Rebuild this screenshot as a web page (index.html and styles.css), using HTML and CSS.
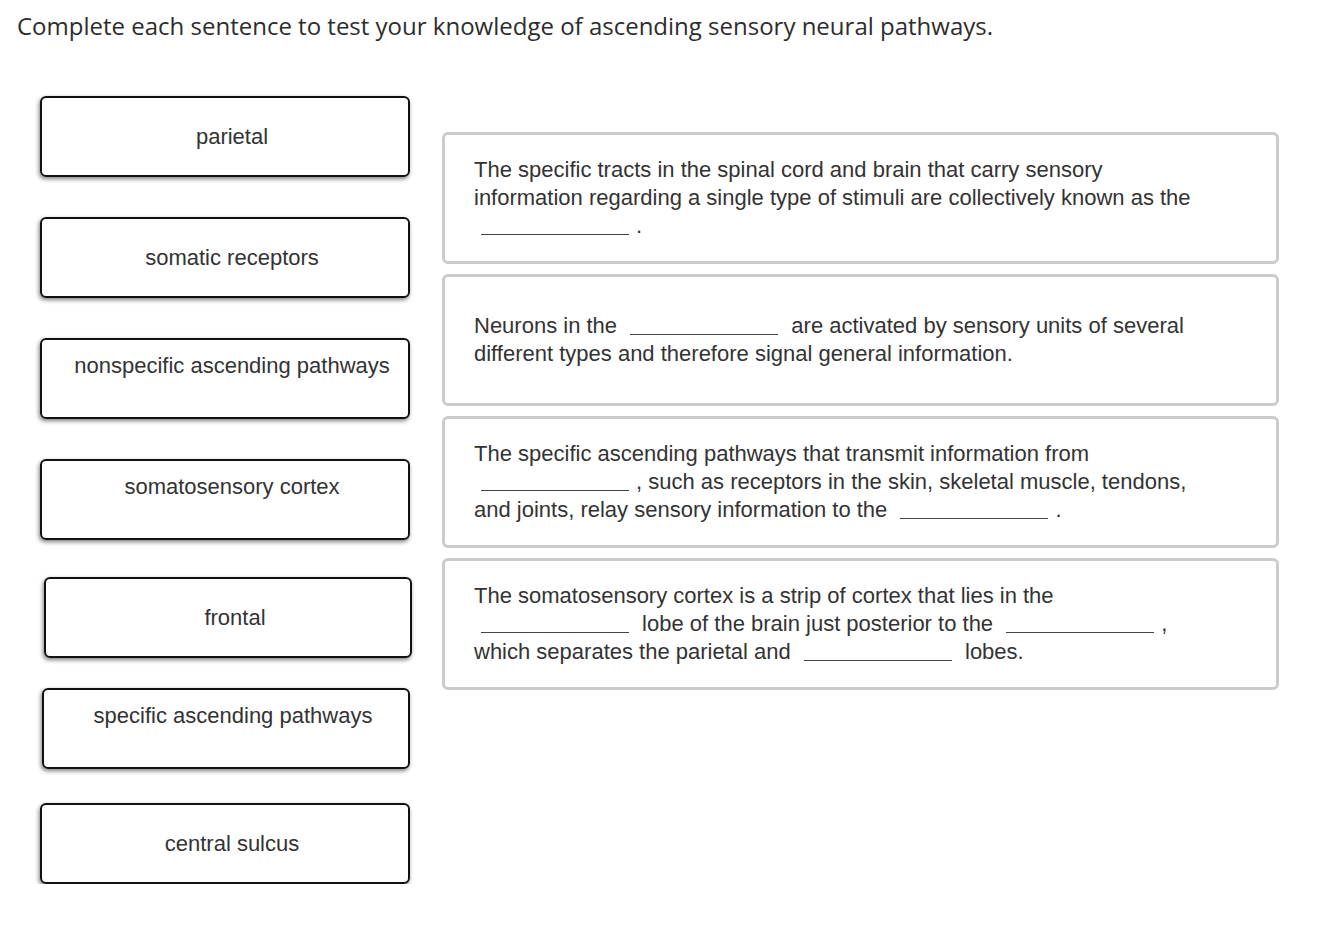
FILE: index.html
```html
<!DOCTYPE html>
<html lang="en">
<head>
    <meta charset="UTF-8">
    <meta name="viewport" content="width=device-width, initial-scale=1.0">
    <title>Ascending Sensory Pathways</title>
    <link rel="stylesheet" href="styles.css">
</head>
<body>

    <h1 class="prompt">Complete each sentence to test your knowledge of ascending sensory neural pathways.</h1>

    <div class="board">
        <!-- answer tiles, dragged around a little by the student -->
        <div class="tiles">
            <div class="tile">parietal</div>
            <div class="tile">somatic receptors</div>
            <div class="tile tile--top">nonspecific ascending pathways</div>
            <div class="tile tile--top">somatosensory cortex</div>
            <div class="tile tile--frontal">frontal</div>
            <div class="tile tile--top tile--specific">specific ascending pathways</div>
            <div class="tile tile--sulcus">central sulcus</div>
        </div>

        <!-- sentences with drop targets -->
        <div class="sentences">
            <div class="sentence">
                <p>The specific tracts in the spinal cord and brain that carry sensory information regarding a single type of stimuli are collectively known as the <span class="blank"></span>.</p>
            </div>
            <div class="sentence">
                <p>Neurons in the <span class="blank"></span> are activated by sensory units of several different types and therefore signal general information.</p>
            </div>
            <div class="sentence">
                <p>The specific ascending pathways that transmit information from <span class="blank"></span>, such as receptors in the skin, skeletal muscle, tendons, and joints, relay sensory information to the <span class="blank"></span>.</p>
            </div>
            <div class="sentence">
                <p>The somatosensory cortex is a strip of cortex that lies in the <span class="blank"></span> lobe of the brain just posterior to the <span class="blank"></span>, which separates the parietal and <span class="blank"></span> lobes.</p>
            </div>
        </div>
    </div>

</body>
</html>
```

FILE: styles.css
```css
body {
    margin: 0;
    background: #fff;
    color: #333;
    font-family: "Liberation Sans", Arial, sans-serif;
}
.prompt {
    margin: 0;
    padding: 12px 17px 0;
    font-family: "Open Sans", "Liberation Sans", sans-serif;
    font-size: 24px;
    font-weight: normal;
    line-height: 28px;
    color: #2d2d2d;
}
.board {
    display: flex;
    align-items: flex-start;
    gap: 32px;
    padding: 0 0 0 40px;
}
.tiles {
    display: flex;
    flex-direction: column;
    gap: 40px;
    width: 370px;
    margin-top: 56px;
}
.tile {
    box-sizing: border-box;
    height: 81px;
    padding: 0 2px 0 16px;
    border: 2px solid #111;
    border-radius: 6px;
    box-shadow: -1px 2px 4px rgba(0, 0, 0, 0.5);
    display: flex;
    align-items: center;
    justify-content: center;
    font-size: 22px;
    line-height: 28px;
    white-space: nowrap;
    color: #333;
}
.tile--top {
    align-items: flex-start;
    padding-top: 12px;
}
.tile--frontal {
    margin: -3px 0 0 4px;
    width: 368px;
}
.tile--specific {
    margin: -10px 0 0 2px;
}
.tile--sulcus {
    margin-top: -6px;
}
.sentences {
    display: flex;
    flex-direction: column;
    gap: 10px;
    width: 837px;
    margin-top: 92px;
}
.sentence {
    box-sizing: border-box;
    min-height: 132px;
    padding: 0 66px 0 29px;
    border: 3px solid #cbcbcb;
    border-radius: 6px;
    display: flex;
    align-items: center;
}
.sentence p {
    margin: 0;
    font-size: 22px;
    line-height: 28px;
    color: #333;
}
.blank {
    display: inline-block;
    width: 148px;
    margin: 0 7px;
    border-bottom: 1px solid #444;
    vertical-align: -2px;
}
```
